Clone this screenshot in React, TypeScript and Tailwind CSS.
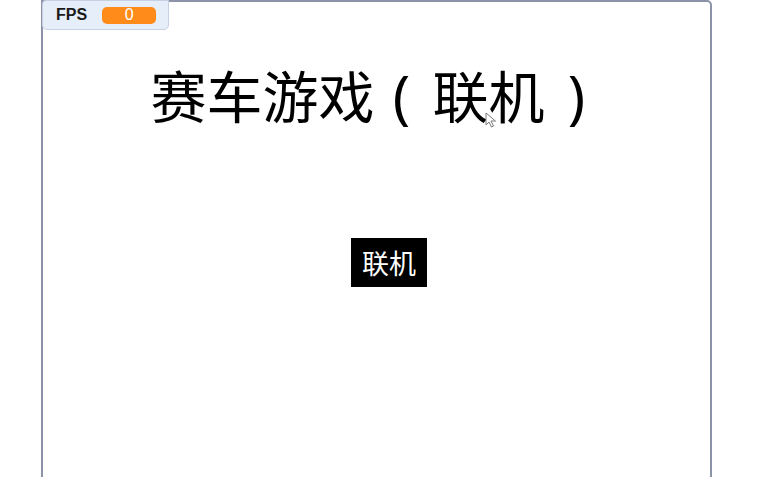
import React from "react";

export default function App() {
  return (
    <div className="relative w-[765px] h-[477px] overflow-hidden bg-white" style={{ fontFamily: '"Noto Sans CJK SC", "Noto Sans", sans-serif' }}>
      <div className="ml-[41px] w-[671px] h-[500px] border-2 border-[#8c93a8] rounded-tr-[5px] flex flex-col">
        <h1 className="pt-[64px] h-[120px] text-center text-[56px] leading-[56px] font-normal text-black whitespace-nowrap">
          赛车游戏
          <span className="inline-block w-[58px] pr-[4px] text-center text-[58px] leading-[56px]" style={{ fontFamily: '"Noto Sans", sans-serif' }}>(</span>
          联机
          <span className="inline-block w-[58px] pl-[6px] text-center text-[58px] leading-[56px]" style={{ fontFamily: '"Noto Sans", sans-serif' }}>)</span>
        </h1>
        <button className="mt-[116px] ml-[308px] w-[76px] h-[49px] bg-black text-white text-[27px] leading-none flex items-center justify-center">联机</button>
      </div>

      <div className="absolute left-[42px] top-0 w-[127px] h-[30px] bg-[#e6eef9] border border-[#c6d1e4] rounded-b-[5px] rounded-tl-[4px] flex items-center pl-[13px]" style={{ fontFamily: '"Liberation Sans", Arial, sans-serif' }}>
        <span className="text-[16px] font-bold text-[#1a1a1a] leading-none">FPS</span>
        <span className="ml-[15px] w-[54px] h-[17px] rounded-[5px] bg-[#ff8c1a] text-white text-[16px] leading-none flex items-center justify-center">0</span>
      </div>

      <svg className="absolute left-[485px] top-[112px]" width="12" height="16" viewBox="0 0 12 16">
        <path d="M1 1 L1 13 L4 10 L6.5 15 L8.5 14 L6 9 L10.5 9 Z" fill="#fff" stroke="#7a7a7a" strokeWidth="1" strokeLinejoin="round" />
      </svg>
    </div>
  );
}
